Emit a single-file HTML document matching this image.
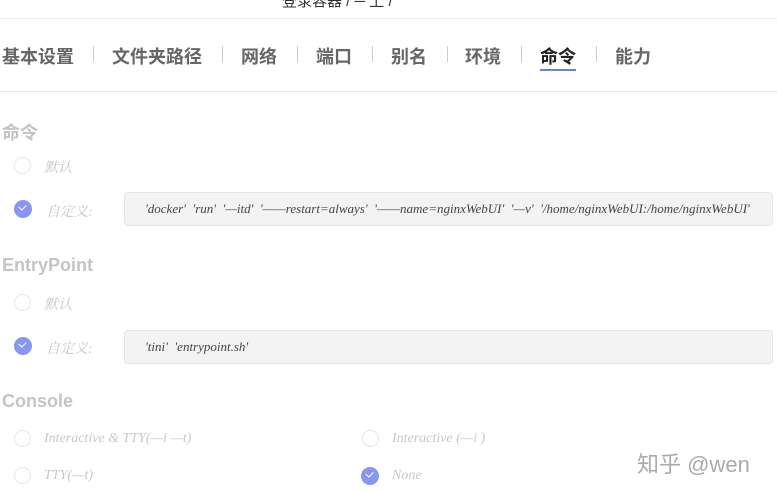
<!DOCTYPE html>
<html><head><meta charset="utf-8"><style>
body{margin:0;width:777px;height:491px;overflow:hidden;background:#fff;font-family:"Liberation Sans","Noto Sans CJK SC",sans-serif;position:relative}
.a{position:absolute;white-space:nowrap}
.tab{top:43px;font-size:18px;font-weight:bold;color:#666}
.sep{top:46px;width:1px;height:16px;background:#ccc}
.h{font-size:18px;font-weight:bold;color:#c4c4c4}
.r{width:17px;height:17px;border:1px solid #e6e6e6;border-radius:50%;box-sizing:border-box}
.c{width:18px;height:18px;border-radius:50%;background:#8796f0}
.c:after{content:"";position:absolute;left:5px;top:4px;width:6px;height:4px;border-left:1.5px solid #fff;border-bottom:1.5px solid #fff;transform:rotate(-45deg)}
.l{font-family:"Liberation Serif","Noto Serif CJK SC",serif;font-style:italic;color:#c8c8c8;font-size:14px}
.box{left:124px;width:649px;height:34px;background:#f3f3f3;border:1px solid #e6e6e6;border-radius:4px;box-sizing:border-box;overflow:hidden;font-family:"Liberation Serif",serif;font-style:italic;font-size:13px;color:#444;line-height:32px;padding-left:20px;white-space:nowrap}
</style></head><body>
<div class="a" style="left:282px;top:-10px;font-size:15px;color:#333">登录容器 / ─ 上 /</div>
<div class="a" style="left:0;top:18px;width:777px;height:1px;background:#eee"></div>
<div class="a tab" style="left:2px">基本设置</div><div class="a sep" style="left:93px"></div>
<div class="a tab" style="left:112px">文件夹路径</div><div class="a sep" style="left:222px"></div>
<div class="a tab" style="left:241px">网络</div><div class="a sep" style="left:297px"></div>
<div class="a tab" style="left:316px">端口</div><div class="a sep" style="left:372px"></div>
<div class="a tab" style="left:391px">别名</div><div class="a sep" style="left:447px"></div>
<div class="a tab" style="left:465px">环境</div><div class="a sep" style="left:521px"></div>
<div class="a tab" style="left:540px;color:#222">命令</div><div class="a sep" style="left:596px"></div>
<div class="a tab" style="left:615px">能力</div>
<div class="a" style="left:540px;top:69px;width:36px;height:2px;background:#6b7fe0"></div>
<div class="a" style="left:0;top:91px;width:777px;height:1px;background:#e8e8e8"></div>

<div class="a h" style="left:2px;top:119px">命令</div>
<div class="a r" style="left:14px;top:157px"></div><div class="a l" style="left:44px;top:157px">默认</div>
<div class="a c" style="left:14px;top:200px"></div><div class="a l" style="left:46px;top:201px">自定义:</div>
<div class="a box" style="top:192px">'docker'&nbsp; 'run'&nbsp; '—itd'&nbsp; '——restart=always'&nbsp; '——name=nginxWebUI'&nbsp; '—v'&nbsp; '/home/nginxWebUI:/home/nginxWebUI'</div>

<div class="a h" style="left:2px;top:255px">EntryPoint</div>
<div class="a r" style="left:14px;top:294px"></div><div class="a l" style="left:44px;top:294px">默认</div>
<div class="a c" style="left:14px;top:337px"></div><div class="a l" style="left:46px;top:338px">自定义:</div>
<div class="a box" style="top:330px">'tini'&nbsp; 'entrypoint.sh'</div>

<div class="a h" style="left:2px;top:391px">Console</div>
<div class="a r" style="left:14px;top:430px"></div><div class="a l" style="left:44px;top:431px">Interactive &amp; TTY(—i —t)</div>
<div class="a r" style="left:362px;top:430px"></div><div class="a l" style="left:392px;top:431px">Interactive (—i )</div>
<div class="a r" style="left:14px;top:467px"></div><div class="a l" style="left:44px;top:468px">TTY(—t)</div>
<div class="a c" style="left:361px;top:467px"></div><div class="a l" style="left:392px;top:468px">None</div>
<div class="a" style="left:637px;top:447px;font-size:22px;color:#aaa">知乎 @wen</div>
</body></html>
